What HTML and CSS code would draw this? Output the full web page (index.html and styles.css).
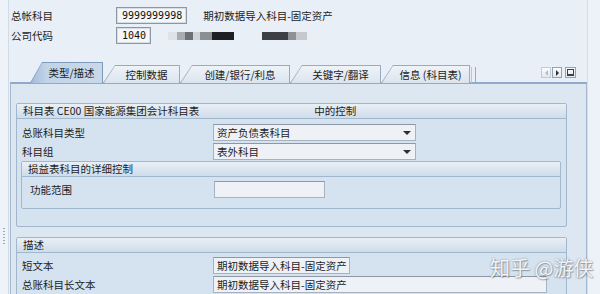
FILE: index.html
```html
<!DOCTYPE html>
<html lang="zh-CN">
<head>
    <meta charset="UTF-8">
    <meta name="viewport" content="width=device-width, initial-scale=1.0">
    <title>总帐科目</title>
    <link rel="stylesheet" href="styles.css">
</head>
<body>

<div class="frame">
    <div class="side-strip"><span class="grip"></span></div>

    <div class="main">
        <div class="head">
            <div class="head-row">
                <span class="head-label">总帐科目</span>
                <span class="code-box">9999999998</span>
                <span class="head-text">期初数据导入科目-固定资产</span>
            </div>
            <div class="head-row">
                <span class="head-label">公司代码</span>
                <span class="code-box">1040</span>
                <span class="blur blur-a"></span>
                <span class="blur blur-b"></span>
            </div>
        </div>

        <div class="tab-strip">
            <div class="tab active t1"><span>类型/描述</span></div>
            <div class="tab t2"><span>控制数据</span></div>
            <div class="tab t3"><span>创建/银行/利息</span></div>
            <div class="tab t4"><span>关键字/翻译</span></div>
            <div class="tab t5"><span>信息 (科目表)</span></div>
            <div class="tab-stack"></div>
            <div class="tab-nav">
                <span class="nav-btn off"><i class="arr-left"></i></span>
                <span class="nav-btn"><i class="arr-right"></i></span>
                <span class="nav-btn list"><i class="list-icon"></i></span>
            </div>
        </div>

        <div class="panel">
            <div class="group">
                <div class="group-head">
                    <span>科目表 CE00 国家能源集团会计科目表</span>
                    <span class="head-tail">中的控制</span>
                </div>
                <div class="group-body g1">
                    <div class="row">
                        <span class="label">总账科目类型</span>
                        <span class="select w-sel">资产负债表科目<i class="drop"></i></span>
                    </div>
                    <div class="row">
                        <span class="label">科目组</span>
                        <span class="select w-sel">表外科目<i class="drop"></i></span>
                    </div>
                    <div class="group inner">
                        <div class="group-head">损益表科目的详细控制</div>
                        <div class="group-body g-inner">
                            <div class="row">
                                <span class="label inner-label">功能范围</span>
                                <span class="field w-func"></span>
                            </div>
                        </div>
                    </div>
                </div>
            </div>

            <div class="group g2-box">
                <div class="group-head">描述</div>
                <div class="group-body g2">
                    <div class="row">
                        <span class="label">短文本</span>
                        <span class="field w-short">期初数据导入科目-固定资产</span>
                    </div>
                    <div class="row">
                        <span class="label">总账科目长文本</span>
                        <span class="field w-long">期初数据导入科目-固定资产</span>
                    </div>
                </div>
            </div>
        </div>
    </div>

    <div class="right-strip"></div>
</div>

<div class="watermark">知乎 @游侠</div>

</body>
</html>
```

FILE: styles.css
```css
body {
    margin: 0;
    width: 600px;
    height: 294px;
    overflow: hidden;
    background-color: #e9eff6;
    font-family: "Noto Sans CJK SC", "Noto Sans", sans-serif;
    font-size: 10.5px;
    color: #1c1c1c;
    position: relative;
}
.frame {
    display: flex;
    height: 294px;
}
.side-strip {
    width: 9px;
    background-color: #eef3f9;
    border-right: 1px solid #d2dce7;
    display: flex;
    flex-direction: column;
    align-items: center;
    padding-top: 228px;
    box-sizing: border-box;
}
.grip {
    width: 2px;
    height: 16px;
    background-image: repeating-linear-gradient(#9aa8b8 0 1px, transparent 1px 3px);
}
.main {
    width: 578px;
    display: flex;
    flex-direction: column;
}
.right-strip {
    flex: 1;
    background-color: #edf2f8;
    border-left: 1px solid #d4dde8;
}

/* header fields */
.head {
    padding: 7px 0 0 2px;
    display: flex;
    flex-direction: column;
    gap: 3px;
}
.head-row {
    display: flex;
    align-items: center;
    height: 17px;
}
.head-label {
    width: 105px;
}
.code-box {
    height: 17px;
    box-sizing: border-box;
    padding: 0 4px 0 5px;
    border: 1px solid #8c97a3;
    box-shadow: inset 0 0 0 1px #d7dde4;
    background-color: #f4f6f8;
    font-family: "DejaVu Sans Mono", monospace;
    font-size: 10px;
    line-height: 15px;
    color: #111;
}
.head-text {
    margin-left: 16px;
}
.blur {
    height: 8px;
    margin-top: 1px;
}
.blur-a {
    width: 66px;
    margin-left: 17px;
    background: linear-gradient(90deg, #dfe3e8 0 9px, #a8adb3 9px 17px, #6d7176 17px 25px, #d0d4d9 25px 32px, #8a8f95 32px 44px, #1d1f22 44px 66px);
}
.blur-b {
    width: 45px;
    margin-left: 28px;
    background: linear-gradient(90deg, #3c3f43 0 26px, #8d9196 26px 34px, #c5c9ce 34px 45px);
}

/* tabs */
.tab-strip {
    margin-top: 18px;
    height: 21px;
    display: flex;
    align-items: flex-end;
    padding-left: 21px;
    position: relative;
    z-index: 1;
}
.tab {
    height: 18px;
    position: relative;
    display: flex;
    align-items: center;
    justify-content: center;
    padding-left: 10px;
    box-sizing: border-box;
    background-color: #9aabbe;
    clip-path: polygon(12px 0, 100% 0, 100% 100%, 0 100%);
}
.tab::before {
    content: "";
    position: absolute;
    top: 1px;
    left: 1px;
    right: 1px;
    bottom: 0;
    background: linear-gradient(#eef3f8, #dbe4ee);
    clip-path: polygon(11px 0, 100% 0, 100% 100%, 0 100%);
}
.tab span {
    position: relative;
}
.tab.active {
    height: 21px;
    background-color: #7f9cbf;
}
.tab.active::before {
    background: linear-gradient(90deg, #a3bddb 0, #c2d4e8 16px, #c9d9ea 100%);
}
.t1 { width: 73px; }
.t2 { width: 77px; }
.t3 { width: 110px; }
.t4 { width: 91px; }
.t5 { width: 89px; }
.tab-stack {
    width: 3px;
    height: 16px;
    border-right: 1px solid #9aabbe;
    border-left: 1px solid #b8c6d5;
    margin-left: 1px;
}
.tab-nav {
    margin-left: auto;
    margin-right: 11px;
    align-self: flex-start;
    margin-top: 5px;
    display: flex;
    gap: 1px;
}
.nav-btn {
    width: 10px;
    height: 11px;
    box-sizing: border-box;
    border: 1px solid #93a3b5;
    background: linear-gradient(#fbfcfd, #e3e9f0);
    display: flex;
    align-items: center;
    justify-content: center;
}
.nav-btn.off {
    border-color: #c2ccd7;
}
.nav-btn.list {
    margin-left: 2px;
    width: 11px;
}
.arr-left {
    border-top: 3px solid transparent;
    border-bottom: 3px solid transparent;
    border-right: 3px solid #b5bec8;
}
.arr-right {
    border-top: 3px solid transparent;
    border-bottom: 3px solid transparent;
    border-left: 3px solid #2c3136;
}
.list-icon {
    width: 5px;
    height: 4px;
    border: 1px solid #3a4148;
    border-bottom-width: 2px;
}

/* panel */
.panel {
    margin-left: 1px;
    flex: 1;
    border-top: 2px solid #8faacb;
    border-left: 1px solid #a6b9cf;
    border-right: 1px solid #a6b9cf;
    margin-top: -1px;
    background-color: #dde7f2;
    padding: 19px 0 0 5px;
    display: flex;
    flex-direction: column;
    gap: 10px;
}
.group {
    width: 551px;
    box-sizing: border-box;
    border: 1px solid #a2b6cc;
    border-radius: 2px;
    background-color: #d5e3f1;
}
.group-head {
    height: 14px;
    line-height: 14px;
    padding-left: 6px;
    background: linear-gradient(#e9eff6, #cfdcea);
    border-bottom: 1px solid #a2b6cc;
    display: flex;
}
.head-tail {
    margin-left: 115px;
}
.group-body {
    display: flex;
    flex-direction: column;
    gap: 2px;
    padding: 5px 0 0 4px;
}
.g1 {
    height: 107px;
    box-sizing: border-box;
}
.row {
    height: 17px;
    display: flex;
    align-items: center;
    padding-left: 1px;
}
.label {
    width: 191px;
}
.select, .field {
    height: 17px;
    box-sizing: border-box;
    border: 1px solid #a7b2bd;
    border-top-color: #8d98a4;
    background-color: #eef2f6;
    padding-left: 3px;
    line-height: 15px;
    position: relative;
}
.w-sel { width: 203px; }
.w-func { width: 111px; }
.w-short { width: 137px; }
.w-long { width: 334px; }
.drop {
    position: absolute;
    right: 4px;
    top: 6px;
    border-left: 4px solid transparent;
    border-right: 4px solid transparent;
    border-top: 4px solid #2b3035;
}
.inner {
    width: 540px;
    height: 48px;
    margin-top: -1px;
}
.g-inner {
    padding: 4px 0 0 7px;
}
.inner-label {
    width: 184px;
}
.g2 {
    padding-top: 4px;
    padding-bottom: 6px;
}

.watermark {
    position: absolute;
    left: 490px;
    top: 253px;
    font-size: 20px;
    color: rgba(255, 255, 255, 0.9);
    text-shadow: 0 0 2px rgba(60, 70, 80, 0.55), 1px 1px 1px rgba(60, 70, 80, 0.35);
    letter-spacing: 0px;
}
```
